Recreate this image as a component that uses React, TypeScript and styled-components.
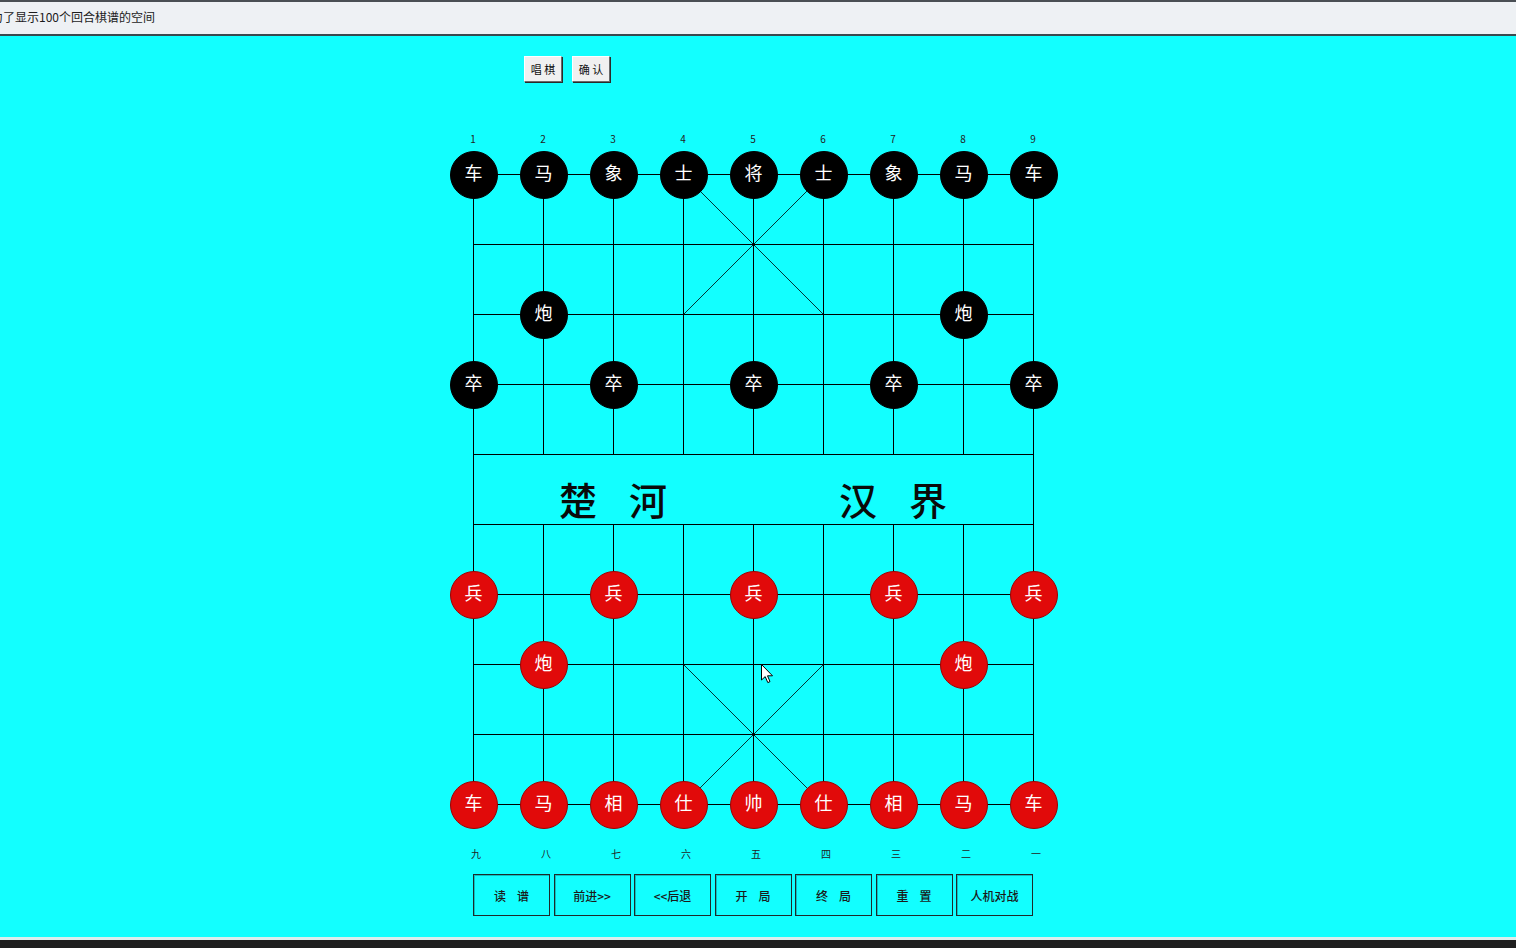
import React from 'react';
import styled, { createGlobalStyle } from 'styled-components';

const CJK = `"Noto Sans CJK SC", "Noto Sans", sans-serif`;
const STEP = 70;
const OX = 35;
const OY = 70;

const GlobalStyle = createGlobalStyle`
  html, body {
    margin: 0;
    padding: 0;
    height: 100%;
    overflow: hidden;
  }
  body {
    font-family: ${CJK};
  }
`;

const Window = styled.div`
  display: flex;
  flex-direction: column;
  width: 1516px;
  height: 948px;
`;

const TitleBar = styled.div`
  height: 32px;
  display: flex;
  align-items: center;
  background: #eef1f4;
  border-top: 2px solid #4a4f54;
  border-bottom: 2px solid #3a4a4e;
  font-size: 12px;
  color: #1b1b1b;
  white-space: nowrap;
  overflow: hidden;
`;

const TitleText = styled.span`
  margin-left: -9px;
  margin-top: -3px;
`;

const Main = styled.main`
  flex: 1;
  background: #12ffff;
  padding: 20px 0 0 438px;
  position: relative;
`;

const TopTools = styled.div`
  display: flex;
  gap: 10px;
  padding-left: 86px;
  height: 26px;
  margin-bottom: 22px;
`;

const SysButton = styled.button`
  width: 38px;
  height: 26px;
  padding: 0;
  background: #f0f0f0;
  border: 1px solid;
  border-color: #ffffff #6a6a6a #6a6a6a #ffffff;
  box-shadow: 1px 1px 0 #2a2a2a;
  font-family: ${CJK};
  font-size: 11px;
  color: #111;
  white-space: pre;
`;

const Board = styled.div`
  position: relative;
  width: 630px;
`;

const Lines = styled.svg`
  position: absolute;
  left: 0;
  top: 0;
`;

const LabelRow = styled.div<{ $bottom?: boolean }>`
  display: grid;
  grid-template-columns: repeat(9, 70px);
  height: 70px;
  align-items: ${(p) => (p.$bottom ? 'end' : 'center')};
  padding-bottom: ${(p) => (p.$bottom ? '14px' : '0')};
  box-sizing: border-box;
  font-size: 10px;
  line-height: 12px;
  color: #222;
  position: relative;
`;

const Label = styled.span<{ $shift?: number }>`
  text-align: center;
  transform: translateX(${(p) => p.$shift ?? 0}px);
`;

const Field = styled.div`
  height: 630px;
`;

const River = styled.div`
  position: absolute;
  left: ${OX}px;
  top: ${OY + STEP * 4}px;
  height: 70px;
  display: grid;
  grid-template-columns: repeat(8, 70px);
  align-items: center;
  padding-top: 20px;
  box-sizing: border-box;
  font-size: 38px;
  font-weight: 500;
  line-height: 1;
  color: #0a0a0a;
`;

const RiverChar = styled.span<{ $col: number }>`
  grid-column: ${(p) => p.$col + 1};
  text-align: center;
`;

const Piece = styled.div<{ $red: boolean }>`
  position: absolute;
  width: 48px;
  height: 48px;
  box-sizing: border-box;
  border-radius: 50%;
  background: ${(p) => (p.$red ? '#e10a0a' : '#000000')};
  border: 1px solid ${(p) => (p.$red ? '#a00000' : '#000000')};
  color: #ffffff;
  display: flex;
  align-items: center;
  justify-content: center;
  font-size: 18px;
  line-height: 1;
  padding-bottom: 6px;
`;

const ActionRow = styled.div`
  display: grid;
  grid-template-columns: repeat(7, 77px);
  column-gap: 3.5px;
  margin-left: ${OX}px;
  width: 560px;
`;

const ActionButton = styled.button`
  height: 42px;
  padding: 0;
  background: transparent;
  border: 1px solid #1e2a2a;
  box-shadow: inset 1px 1px 0 rgba(0, 0, 0, 0.25);
  font-family: ${CJK};
  font-size: 12px;
  font-weight: 500;
  color: #1a1a1a;
  white-space: pre;
`;

const Cursor = styled.svg`
  position: absolute;
  left: 761px;
  top: 628px;
`;

const Footer = styled.div`
  height: 8px;
  background: #1f1f1f;
  border-top: 3px solid #dcefee;
`;

const backRow = ['车', '马', '象', '士', '将', '士', '象', '马', '车'];
const redBack = ['车', '马', '相', '仕', '帅', '仕', '相', '马', '车'];

type P = { c: number; r: number; t: string; red: boolean };

const pieces: P[] = [
  ...backRow.map((t, c) => ({ c, r: 0, t, red: false })),
  { c: 1, r: 2, t: '炮', red: false },
  { c: 7, r: 2, t: '炮', red: false },
  ...[0, 2, 4, 6, 8].map((c) => ({ c, r: 3, t: '卒', red: false })),
  ...[0, 2, 4, 6, 8].map((c) => ({ c, r: 6, t: '兵', red: true })),
  { c: 1, r: 7, t: '炮', red: true },
  { c: 7, r: 7, t: '炮', red: true },
  ...redBack.map((t, c) => ({ c, r: 9, t, red: true })),
];

const px = (c: number) => OX + STEP * c;
const py = (r: number) => OY + STEP * r;

const BoardLines = () => {
  const h = [];
  for (let r = 0; r < 10; r++) {
    h.push(<line key={'h' + r} x1={px(0)} x2={px(8) + 1} y1={py(r) + 0.5} y2={py(r) + 0.5} />);
  }
  const v = [];
  for (let c = 0; c < 9; c++) {
    if (c === 0 || c === 8) {
      v.push(<line key={'v' + c} x1={px(c) + 0.5} x2={px(c) + 0.5} y1={py(0)} y2={py(9) + 1} />);
    } else {
      v.push(<line key={'vt' + c} x1={px(c) + 0.5} x2={px(c) + 0.5} y1={py(0)} y2={py(4) + 1} />);
      v.push(<line key={'vb' + c} x1={px(c) + 0.5} x2={px(c) + 0.5} y1={py(5)} y2={py(9) + 1} />);
    }
  }
  return (
    <Lines width={630} height={770}>
      <g stroke="#000" strokeWidth={1} shapeRendering="crispEdges">
        {h}
        {v}
      </g>
      <g stroke="#000" strokeWidth={0.8}>
        <line x1={px(3) + 0.5} y1={py(0) + 0.5} x2={px(5) + 0.5} y2={py(2) + 0.5} />
        <line x1={px(5) + 0.5} y1={py(0) + 0.5} x2={px(3) + 0.5} y2={py(2) + 0.5} />
        <line x1={px(3) + 0.5} y1={py(7) + 0.5} x2={px(5) + 0.5} y2={py(9) + 0.5} />
        <line x1={px(5) + 0.5} y1={py(7) + 0.5} x2={px(3) + 0.5} y2={py(9) + 0.5} />
      </g>
      <circle cx={px(4) + 0.5} cy={py(1) + 0.5} r={1.6} fill="#000" />
      <circle cx={px(4) + 0.5} cy={py(8) + 0.5} r={1.6} fill="#000" />
    </Lines>
  );
};

const numerals = ['九', '八', '七', '六', '五', '四', '三', '二', '一'];
const actions = ['读    谱', '前进>>', '<<后退', '开    局', '终    局', '重    置', '人机对战'];

export default function App() {
  return (
    <>
      <GlobalStyle />
      <Window>
        <TitleBar>
          <TitleText>为了显示100个回合棋谱的空间</TitleText>
        </TitleBar>
        <Main>
          <TopTools>
            <SysButton>唱 棋</SysButton>
            <SysButton>确 认</SysButton>
          </TopTools>
          <Board>
            <BoardLines />
            <LabelRow>
              {Array.from({ length: 9 }, (_, i) => (
                <Label key={i}>{i + 1}</Label>
              ))}
            </LabelRow>
            <Field />
            <LabelRow $bottom>
              {numerals.map((n) => (
                <Label key={n} $shift={3}>
                  {n}
                </Label>
              ))}
            </LabelRow>
            <River>
              <RiverChar $col={1}>楚</RiverChar>
              <RiverChar $col={2}>河</RiverChar>
              <RiverChar $col={5}>汉</RiverChar>
              <RiverChar $col={6}>界</RiverChar>
            </River>
            {pieces.map((p, i) => (
              <Piece key={i} $red={p.red} style={{ left: px(p.c) + 0.5 - 24, top: py(p.r) + 0.5 - 24 }}>
                {p.t}
              </Piece>
            ))}
          </Board>
          <ActionRow>
            {actions.map((a) => (
              <ActionButton key={a}>{a}</ActionButton>
            ))}
          </ActionRow>
          <Cursor width={14} height={22} viewBox="0 0 14 22">
            <path d="M0.5 0.5 L0.5 16 L4.2 12.6 L6.8 18.6 L9 17.6 L6.5 11.8 L11.5 11.8 Z" fill="#fff" stroke="#000" strokeWidth={1} />
          </Cursor>
        </Main>
        <Footer />
      </Window>
    </>
  );
}
